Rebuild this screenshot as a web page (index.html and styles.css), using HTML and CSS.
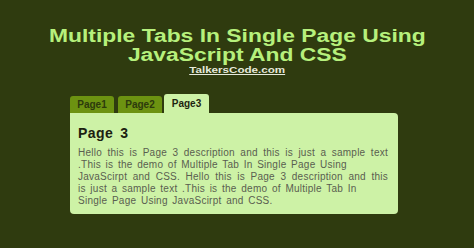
FILE: index.html
```html
<!DOCTYPE html>
<html>
<head>
<meta charset="utf-8">
<link rel="stylesheet" href="styles.css">
</head>
<body>
<header class="head">
  <h1 class="title">Multiple Tabs In Single Page Using<br>JavaScript And CSS</h1>
  <a class="site" href="#">TalkersCode.com</a>
</header>
<main class="tabs">
  <nav class="tab-bar">
    <span class="tab">Page1</span>
    <span class="tab">Page2</span>
    <span class="tab active">Page3</span>
  </nav>
  <section class="panel">
    <h2 class="panel-title">Page 3</h2>
    <p class="panel-text">Hello this is Page 3 description and this is just a sample text .This is the demo of Multiple Tab In Single Page Using<br>JavaScirpt and CSS. Hello this is Page 3 description and this is just a sample text .This is the demo of Multiple Tab In<br>Single Page Using JavaScirpt and CSS.</p>
  </section>
</main>
</body>
</html>
```
FILE: styles.css
```css
html, body {
  margin: 0;
  padding: 0;
}
body {
  width: 474px;
  height: 248px;
  overflow: hidden;
  background: #2f3b0f;
  font-family: "Liberation Sans", Arial, sans-serif;
}
.head {
  display: flex;
  flex-direction: column;
  align-items: center;
  padding-top: 27px;
}
.title {
  margin: 0;
  font-size: 18px;
  line-height: 19px;
  font-weight: bold;
  color: #b6f07c;
  text-align: center;
  white-space: nowrap;
  transform: scaleX(1.27);
}
.site {
  margin-top: 0;
  font-size: 9px;
  line-height: 11px;
  font-weight: bold;
  color: #e6eadc;
  text-decoration: underline;
  transform: scaleX(1.29);
}
.tabs {
  display: flex;
  flex-direction: column;
  margin: 18px 0 0 70px;
  width: 328px;
}
.tab-bar {
  display: flex;
  align-items: flex-end;
  gap: 4px;
  height: 19px;
}
.tab {
  width: 44px;
  height: 17px;
  line-height: 17px;
  text-align: center;
  font-size: 10px;
  font-weight: bold;
  color: #2d3a0c;
  background: #6c9211;
  border-radius: 3px 3px 0 0;
}
.tab.active {
  height: 19px;
  line-height: 19px;
  width: 45px;
  margin-left: -2px;
  color: #1e2410;
  background: #cdf2a6;
}
.panel {
  background: #cdf2a6;
  border-radius: 0 4px 4px 4px;
  padding: 12px 10px 8px 8px;
  height: 81px;
}
.panel-title {
  margin: 0 0 6px 0;
  font-size: 14px;
  line-height: 16px;
  font-weight: bold;
  word-spacing: 3px;
  letter-spacing: 0.4px;
  color: #1b2010;
}
.panel-text {
  margin: 0;
  font-size: 10px;
  line-height: 12px;
  word-spacing: 1.6px;
  letter-spacing: 0.25px;
  text-align: justify;
  color: #5a5e50;
}
```
